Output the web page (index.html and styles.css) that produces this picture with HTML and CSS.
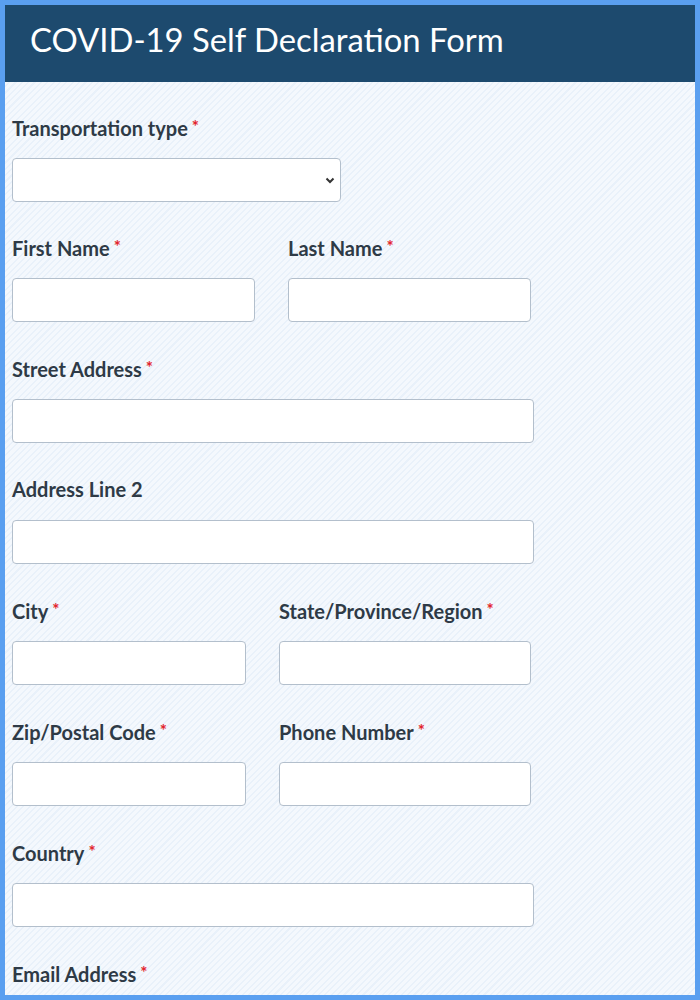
FILE: index.html
```html
<!DOCTYPE html>
<html>
<head>
<meta charset="utf-8">
<link rel="stylesheet" href="styles.css">
</head>
<body>
<div class="frame">
  <header class="header"><h1 class="title">COVID-19 Self Declaration Form</h1></header>
  <form class="form">
    <div class="row">
      <div class="field w-select">
        <label class="label">Transportation type<span class="req">*</span></label>
        <div class="select-box"><select class="control select"><option></option></select>
          <svg class="chev" width="10" height="7" viewBox="0 0 10 7"><path d="M1.5 1.5 L5 5 L8.5 1.5" fill="none" stroke="#333" stroke-width="2"/></svg>
        </div>
      </div>
    </div>
    <div class="row two">
      <div class="field w-half"><label class="label">First Name<span class="req">*</span></label><input class="control"></div>
      <div class="field w-half"><label class="label">Last Name<span class="req">*</span></label><input class="control"></div>
    </div>
    <div class="row">
      <div class="field w-full"><label class="label">Street Address<span class="req">*</span></label><input class="control"></div>
    </div>
    <div class="row">
      <div class="field w-full"><label class="label">Address Line 2</label><input class="control"></div>
    </div>
    <div class="row two">
      <div class="field w-small"><label class="label">City<span class="req">*</span></label><input class="control"></div>
      <div class="field w-wide"><label class="label">State/Province/Region<span class="req">*</span></label><input class="control"></div>
    </div>
    <div class="row two">
      <div class="field w-small"><label class="label">Zip/Postal Code<span class="req">*</span></label><input class="control"></div>
      <div class="field w-wide"><label class="label">Phone Number<span class="req">*</span></label><input class="control"></div>
    </div>
    <div class="row">
      <div class="field w-full"><label class="label">Country<span class="req">*</span></label><input class="control"></div>
    </div>
    <div class="row">
      <div class="field w-full"><label class="label">Email Address<span class="req">*</span></label><input class="control"></div>
    </div>
  </form>
</div>
</body>
</html>
```
FILE: styles.css
```css
html, body { margin: 0; padding: 0; }
body { font-family: Lato, "Liberation Sans", sans-serif; }
.frame {
  box-sizing: border-box;
  width: 700px;
  height: 1000px;
  border: 5px solid #5a9ff0;
  overflow: hidden;
  display: flex;
  flex-direction: column;
}
.header {
  background: #1d4a6e;
  height: 77px;
  flex: none;
  display: flex;
  align-items: center;
  padding-left: 25px;
}
.title {
  margin: 0;
  color: #fff;
  font-weight: 400;
  font-size: 32.8px;
  line-height: 1;
  padding-bottom: 6px;
}
.form {
  flex: 1;
  padding: 33px 7px 0;
  background-color: #f2f7fc;
  background-image: repeating-linear-gradient(-45deg, #f4f8fd 0 3px, #e9f1fa 3px 4.5px);
}
.row { display: flex; gap: 33px; margin-bottom: 34px; }
.field { display: flex; flex-direction: column; }
.label {
  font-size: 20px;
  font-weight: 700;
  color: #2e3a46;
  line-height: 24px;
  height: 24px;
  margin-bottom: 19px;
  white-space: nowrap;
}
.req { color: #e3232b; font-size: 17px; margin-left: 4px; vertical-align: 3px; }
.control {
  box-sizing: border-box;
  height: 44px;
  width: 100%;
  margin: 0;
  border: 1px solid #b3bfcc;
  border-radius: 4px;
  background: #fff;
  font: inherit;
}
.select { height: 44px; }
.select-box { position: relative; height: 43px; }
.select { appearance: none; -webkit-appearance: none; }
.chev { position: absolute; right: 6px; top: 19px; }
.w-select { width: 329px; }
.w-half { width: 243px; }
.w-full { width: 522px; }
.w-small { width: 234px; }
.w-wide { width: 252px; }
```
